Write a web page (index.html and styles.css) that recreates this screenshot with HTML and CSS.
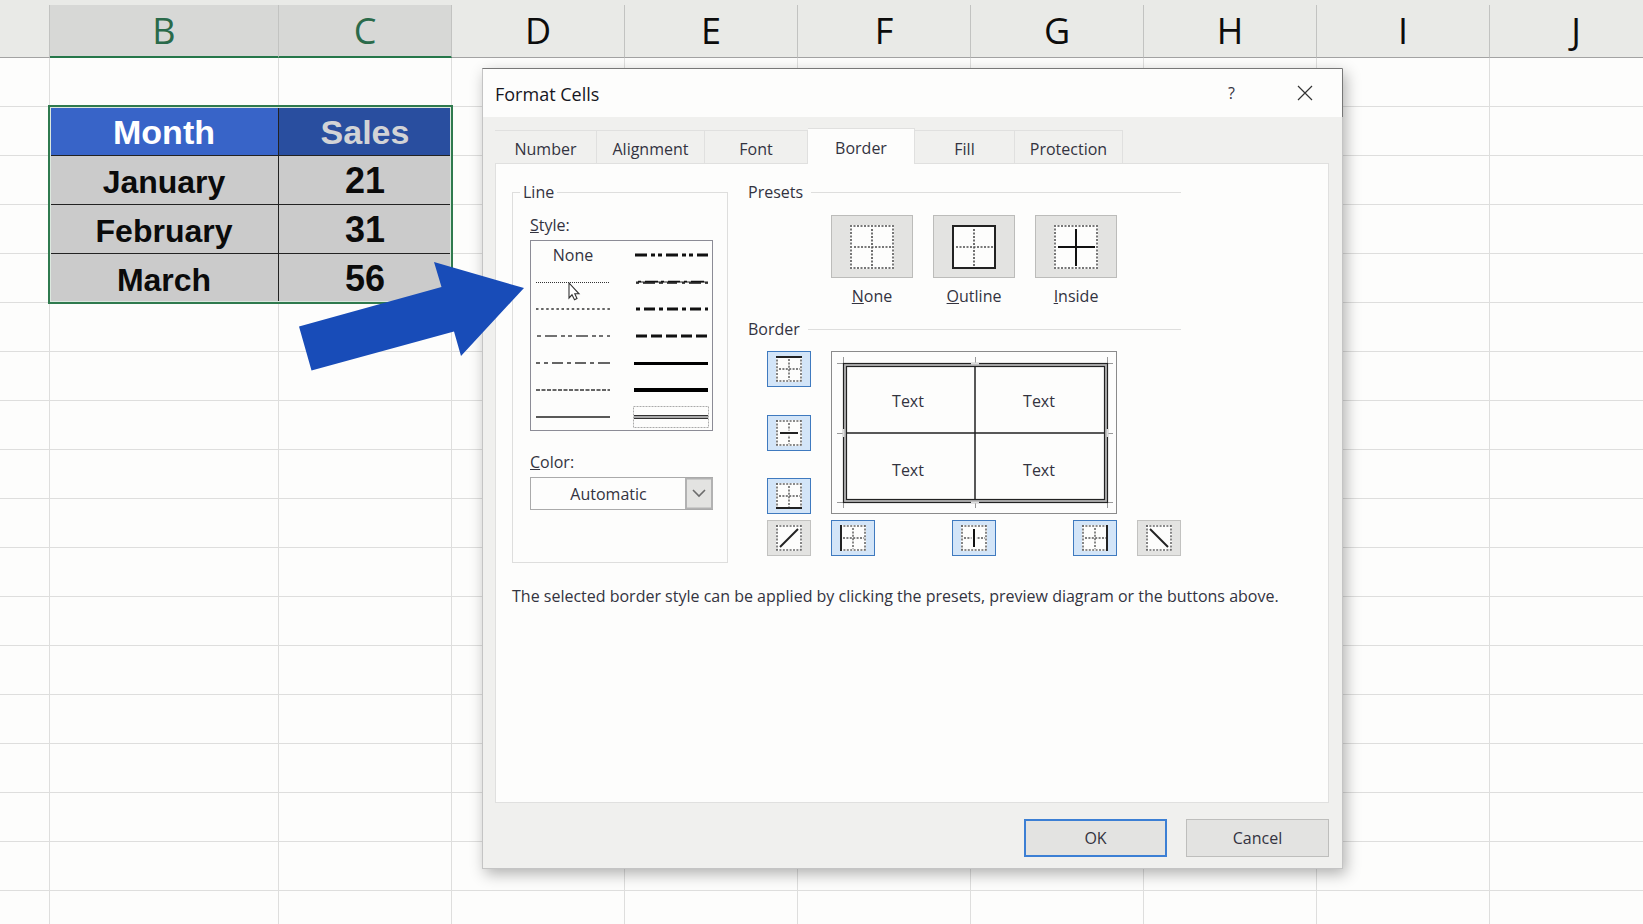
FILE: index.html
```
<!DOCTYPE html>
<html lang="en">
<head>
<meta charset="utf-8">
<title>Format Cells</title>
<link rel="stylesheet" href="styles.css">
</head>
<body>
<main class="desktop">
<table class="sheet">
<colgroup><col class="col-a"><col class="col-b"><col span="8" class="col-rest"></colgroup>
<thead>
<tr><th></th><th class="picked">B</th><th class="picked">C</th><th>D</th><th>E</th><th>F</th><th>G</th><th>H</th><th>I</th><th>J</th></tr>
</thead>
<tbody>
<tr><td><td><td><td><td><td><td><td><td><td></tr>
<tr><td><td class="data head">Month<td class="data head shaded">Sales<td><td><td><td><td><td><td></tr>
<tr><td><td class="data">January<td class="data num">21<td><td><td><td><td><td><td></tr>
<tr><td><td class="data">February<td class="data num">31<td><td><td><td><td><td><td></tr>
<tr><td><td class="data">March<td class="data num">56<td><td><td><td><td><td><td></tr>
<tr><td><td><td><td><td><td><td><td><td><td></tr>
<tr><td><td><td><td><td><td><td><td><td><td></tr>
<tr><td><td><td><td><td><td><td><td><td><td></tr>
<tr><td><td><td><td><td><td><td><td><td><td></tr>
<tr><td><td><td><td><td><td><td><td><td><td></tr>
<tr><td><td><td><td><td><td><td><td><td><td></tr>
<tr><td><td><td><td><td><td><td><td><td><td></tr>
<tr><td><td><td><td><td><td><td><td><td><td></tr>
<tr><td><td><td><td><td><td><td><td><td><td></tr>
<tr><td><td><td><td><td><td><td><td><td><td></tr>
<tr><td><td><td><td><td><td><td><td><td><td></tr>
<tr><td><td><td><td><td><td><td><td><td><td></tr>
<tr><td><td><td><td><td><td><td><td><td><td></tr>
</tbody>
</table>
<div class="selection"></div>

<svg class="defs" width="0" height="0" aria-hidden="true">
<defs>
<symbol id="frame" viewBox="0 0 44 44"><rect width="44" height="44" fill="#fdfdfc"/><path d="M0 1H44M0 43H44M1 0V44M43 0V44" stroke="#777" stroke-width="2" stroke-dasharray="2 1.5"/></symbol>
<symbol id="cross" viewBox="0 0 44 44"><path d="M4 22H41M22 4V41" stroke="#4c4c4c" stroke-width="1.6" stroke-dasharray="2 1.5"/></symbol>
<symbol id="sframe" viewBox="0 0 26 26"><rect width="26" height="26" fill="#fdfdfc"/><path d="M0 1H26M0 25H26M1 0V26M25 0V26" stroke="#666" stroke-width="1.6" stroke-dasharray="2 1.4"/></symbol>
<symbol id="sh" viewBox="0 0 26 26"><path d="M3 13H24" stroke="#555" stroke-width="1.4" stroke-dasharray="2 1.4"/></symbol>
<symbol id="sv" viewBox="0 0 26 26"><path d="M13 3V24" stroke="#555" stroke-width="1.4" stroke-dasharray="2 1.4"/></symbol>
</defs>
</svg>

<section class="dialog" role="dialog" aria-labelledby="dialog-title">
<header class="titlebar">
<h1 id="dialog-title">Format Cells</h1>
<button class="bar-btn" type="button" aria-label="Help">?</button>
<button class="bar-btn" type="button" aria-label="Close"><svg width="16" height="16" viewBox="0 0 16 16"><path d="M1 1L15 15M15 1L1 15" stroke="#333" stroke-width="1.2"/></svg></button>
</header>
<div class="content">
<nav class="tabs" role="tablist">
<button type="button" role="tab" class="tab t-number">Number</button>
<button type="button" role="tab" class="tab t-align">Alignment</button>
<button type="button" role="tab" class="tab t-font">Font</button>
<button type="button" role="tab" class="tab t-border active" aria-selected="true">Border</button>
<button type="button" role="tab" class="tab t-fill">Fill</button>
<button type="button" role="tab" class="tab t-protect">Protection</button>
</nav>
<div class="panel">
<div class="columns">
<fieldset class="line-group">
<legend>Line</legend>
<div class="label" id="style-label"><u>S</u>tyle:</div>
<div class="styles" role="listbox" aria-labelledby="style-label">
<button type="button" role="option" class="style">None</button>
<button type="button" role="option" class="style" aria-label="Medium dash dot dot"><svg width="74" height="20"><path d="M1 10H74" stroke="#111" stroke-width="3" stroke-dasharray="12 4 4 3 4 4"/></svg></button>
<button type="button" role="option" class="style" aria-label="Hair"><svg width="74" height="20"><path d="M0 10.5H74" stroke="#333" stroke-dasharray="1 1"/></svg></button>
<button type="button" role="option" class="style" aria-label="Slanted dash dot"><svg width="74" height="20"><path d="M2 10H74" stroke="#222" stroke-width="1"/><path d="M4 9.500H7M11 9.500H24M27 9.500H30M34 9.500H46M50 9.500H53M57 9.500H70" stroke="#111" stroke-width="1.600"/><path d="M2 11H5M9 11H21M25 11H29M33 11H43M48 11H51M55 11H67M71 11H74" stroke="#111" stroke-width="1.600"/></svg></button>
<button type="button" role="option" class="style" aria-label="Dotted"><svg width="74" height="20"><path d="M0 10H74" stroke="#333" stroke-width="1.6" stroke-dasharray="2.5 2.6"/></svg></button>
<button type="button" role="option" class="style" aria-label="Medium dash dot"><svg width="74" height="20"><path d="M2 10H74" stroke="#111" stroke-width="3" stroke-dasharray="4 4 11 4"/></svg></button>
<button type="button" role="option" class="style" aria-label="Dash dot dot"><svg width="74" height="20"><path d="M1 10H74" stroke="#444" stroke-width="1.6" stroke-dasharray="4 4 12 4 4 3"/></svg></button>
<button type="button" role="option" class="style" aria-label="Medium dashed"><svg width="74" height="20"><path d="M2 10H74" stroke="#111" stroke-width="3" stroke-dasharray="11 4"/></svg></button>
<button type="button" role="option" class="style" aria-label="Dash dot"><svg width="74" height="20"><path d="M0 10H74" stroke="#333" stroke-width="1.6" stroke-dasharray="4 4 4 4 11 4 4 4 11 4 4 4 12 4"/></svg></button>
<button type="button" role="option" class="style" aria-label="Medium"><svg width="74" height="20"><path d="M0 10.5H74" stroke="#000" stroke-width="3"/></svg></button>
<button type="button" role="option" class="style" aria-label="Dashed"><svg width="74" height="20"><path d="M0 10H74" stroke="#333" stroke-width="1.6" stroke-dasharray="4 1.5"/></svg></button>
<button type="button" role="option" class="style" aria-label="Thick"><svg width="74" height="20"><path d="M0 10H74" stroke="#000" stroke-width="4"/></svg></button>
<button type="button" role="option" class="style" aria-label="Thin"><svg width="74" height="20"><path d="M0 10H74" stroke="#222" stroke-width="1.6"/></svg></button>
<button type="button" role="option" class="style" aria-label="Double" aria-selected="true"><svg width="76" height="22"><rect x=".5" y=".5" width="75" height="21" fill="none" stroke="#aaa" stroke-dasharray="2 1"/><path d="M1 11H75" stroke="#aaa" stroke-width="4"/><path d="M1 9.5H75M1 12.5H75" stroke="#333"/></svg></button>
</div>
<label class="label color-label" for="color"><u>C</u>olor:</label>
<div class="combo">
<select id="color"><option>Automatic</option></select>
<svg class="combo-arrow" width="28" height="31" viewBox="0 0 28 31"><rect x="1" y=".5" width="26" height="30" fill="#e3e3e1" stroke="#b2b2b2" stroke-width="2"/><path d="M8 12L14 18L20 12" fill="none" stroke="#6c6c6c" stroke-width="1.6"/></svg>
</div>
</fieldset>

<div class="right">
<h2 class="rule">Presets</h2>
<div class="presets">
<label class="preset"><button type="button" class="tile"><svg width="44" height="44"><use href="#frame"/><use href="#cross"/></svg></button><span><u>N</u>one</span></label>
<label class="preset"><button type="button" class="tile"><svg width="44" height="44"><use href="#frame"/><use href="#cross"/><rect x="1" y="1" width="42" height="42" fill="none" stroke="#222" stroke-width="2"/></svg></button><span><u>O</u>utline</span></label>
<label class="preset"><button type="button" class="tile"><svg width="44" height="44"><use href="#frame"/><path d="M4 22H41M22 4V41" stroke="#111" stroke-width="2"/></svg></button><span><u>I</u>nside</span></label>
</div>
<h2 class="rule">Border</h2>
<div class="border-grid">
<div class="side">
<button type="button" class="edge on" aria-label="Top border"><svg width="26" height="26"><use href="#sframe"/><use href="#sh"/><use href="#sv"/><path d="M0 1H26" stroke="#222" stroke-width="2"/></svg></button>
<button type="button" class="edge on" aria-label="Inner horizontal border"><svg width="26" height="26"><use href="#sframe"/><use href="#sv"/><path d="M4 13H22" stroke="#fdfdfc" stroke-width="5"/><path d="M4 13H22" stroke="#222" stroke-width="2"/></svg></button>
<button type="button" class="edge on" aria-label="Bottom border"><svg width="26" height="26"><use href="#sframe"/><use href="#sh"/><use href="#sv"/><path d="M0 25H26" stroke="#222" stroke-width="2"/></svg></button>
</div>
<svg class="preview" viewBox="0 0 286 163" role="img" aria-label="Border preview">
<rect x=".5" y=".5" width="285" height="162" fill="#fdfdfc" stroke="#8b8b8b"/>
<path d="M6 12.500H12M12.500 6V12M144.500 6V12M276.500 6V12M277 12.500H282M6 82.500H12M277 82.500H282M6 151.500H12M12.500 152V157M144.500 152V157M276.500 152V157M277 151.500H282" stroke="#999"/>
<rect x="14" y="14" width="261" height="136" fill="none" stroke="#b4b4b4" stroke-width="2"/>
<rect x="12.500" y="12.500" width="264" height="139" fill="none" stroke="#222" stroke-width="1.200"/>
<rect x="15.500" y="15.500" width="258" height="133" fill="none" stroke="#222" stroke-width="1.200"/>
<path d="M15 82H274M144 15V149" stroke="#222" stroke-width="1.5"/>
<path d="M140 12.500H148M140 151.500H148M12.500 78V86M276.500 78V86" stroke="#ddd" stroke-width="2"/>
<g class="preview-text"><text x="77" y="56">Text</text><text x="208" y="56">Text</text><text x="77" y="125">Text</text><text x="208" y="125">Text</text></g>
</svg>
<button type="button" class="edge row2" aria-label="Diagonal up border"><svg width="26" height="26"><use href="#sframe"/><path d="M4 22L22 4" stroke="#222" stroke-width="2"/></svg></button>
<div class="bottom">
<button type="button" class="edge on left" aria-label="Left border"><svg width="26" height="26"><use href="#sframe"/><use href="#sh"/><use href="#sv"/><path d="M1 0V26" stroke="#222" stroke-width="2"/></svg></button>
<button type="button" class="edge on" aria-label="Inner vertical border"><svg width="26" height="26"><use href="#sframe"/><use href="#sh"/><path d="M13 4V22" stroke="#fdfdfc" stroke-width="5"/><path d="M13 4V22" stroke="#111" stroke-width="2"/></svg></button>
<button type="button" class="edge on" aria-label="Right border"><svg width="26" height="26"><use href="#sframe"/><use href="#sh"/><use href="#sv"/><path d="M25 0V26" stroke="#222" stroke-width="2"/></svg></button>
</div>
<button type="button" class="edge row2" aria-label="Diagonal down border"><svg width="26" height="26"><use href="#sframe"/><path d="M4 4L22 22" stroke="#222" stroke-width="2"/></svg></button>
</div>
</div>
</div>
<p class="hint">The selected border style can be applied by clicking the presets, preview diagram or the buttons above.</p>
</div>
<footer class="actions">
<button type="button" class="action primary">OK</button>
<button type="button" class="action">Cancel</button>
</footer>
</div>
</section>

<svg class="pointer-arrow" width="226" height="110" viewBox="0 0 226 110" aria-hidden="true"><path d="M0 65.500L142.500 26L135 1L225 27L162 95L155 70.500L12.500 109.500Z" fill="#184cb8"/></svg>
<svg class="cursor" width="13" height="19" viewBox="0 0 13 19" aria-hidden="true"><path d="M1 1V16L4 12.800L6.500 17.800L9 16.500L6.800 11.800H11Z" fill="#fff" stroke="#333" stroke-width="1.1"/></svg>
</main>
</body>
</html>
```
FILE: styles.css
```
* { box-sizing: border-box; }
body { margin: 0; overflow: hidden; background: #fdfdfc; font-family: "Open Sans", "Noto Sans", sans-serif; color: #33333f; }
.desktop { position: relative; height: 100vh; overflow: hidden; padding-top: 5px; background: #e9eae7; }
.defs { position: absolute; }

.sheet { table-layout: fixed; width: 1663px; border-spacing: 0; background: #fdfdfc; }
.col-a { width: 50px; }
.col-b { width: 229px; }
.col-rest { width: 173px; }
.sheet th { height: 53px; padding: 0; border-right: 1px solid #c2c3c1; border-bottom: 1px solid #a3a3a3; background: #e9eae7; color: #0c0c0c; font-size: 36px; font-weight: 400; line-height: 50px; }
.sheet th.picked { border-bottom: 2px solid #26774a; background: #d7d8d6; color: #2a6a4a; }
.sheet td { height: 49px; padding: 0; border-right: 1px solid #dededd; border-bottom: 1px solid #dededd; text-align: center; }
.sheet .data { padding-top: 4px; border-color: #222; background: #cbcbcb; color: #0b0b0b; font: bold 32px/36px "Liberation Sans", sans-serif; }
.sheet .num { padding-top: 2px; font-size: 36px; }
.sheet .head { padding-top: 2px; background: #3864c8; color: #fff; font-size: 34px; }
.sheet .shaded { background: #294e9f; color: #d2d3d6; }
.selection { position: absolute; left: 48px; top: 105px; width: 405px; height: 199px; border: 2px solid #2f7a4e; box-shadow: inset 0 0 0 1px #dce8df; }

.dialog { position: absolute; left: 482px; top: 68px; width: 861px; border: 1px solid #c4c4c4; border-top-color: #777; background: #f0f0ee; box-shadow: 3px 5px 14px rgba(0,0,0,.3); font-size: 16px; line-height: 22px; }
.dialog button, .dialog select { font: inherit; color: inherit; padding: 0; }
.titlebar { display: flex; align-items: center; height: 48px; padding: 0 1px 0 12px; background: #fdfdfc; border-right: 1px solid #777; margin-right: -1px; }
.titlebar h1 { flex: 1; margin: 0; padding-top: 2px; font-size: 18px; font-weight: 400; color: #16161e; }
.bar-btn { display: flex; align-items: center; justify-content: center; width: 73px; height: 46px; border: 0; background: none; }
.content { padding: 11px 13px 11px 12px; }
.tabs { display: flex; align-items: flex-end; height: 35px; }
.dialog .tab { height: 33px; padding-top: 3px; border: 1px solid #e0e0df; border-left: 0; border-bottom: 0; background: #f0f0ee; }
.dialog .tab.active { height: 36px; margin-bottom: -1px; padding-top: 2px; background: #fdfdfc; z-index: 1; }
.t-number { width: 102px; }
.t-align { width: 108px; }
.t-font { width: 103px; }
.t-border { width: 107px; }
.t-fill { width: 100px; }
.t-protect { width: 108px; }
.panel { min-height: 640px; padding: 17px 16px; border: 1px solid #e0e0df; background: #fdfdfc; }
.columns { display: flex; gap: 20px; }
.line-group { width: 216px; height: 382px; margin: 0; padding: 11px 14px 0 17px; border: 1px solid #dededd; }
.line-group legend { margin-left: -10px; padding: 0 3px; }
.label { display: block; margin-bottom: 4px; }
.styles { display: grid; grid-template-columns: 1fr 1fr; grid-auto-rows: 27px; column-gap: 20px; padding: 0 2px 0 3px; border: 1px solid #8c8c96; background: #fdfdfc; }
.style { display: flex; align-items: center; justify-content: center; border: 0; background: none; }
.color-label { margin-top: 20px; }
.combo { display: grid; }
.combo select { grid-area: 1 / 1; height: 33px; appearance: none; border: 1px solid #aaa; border-radius: 0; background: #fdfdfc; padding-right: 26px; text-align: center; text-align-last: center; }
.combo-arrow { grid-area: 1 / 1; justify-self: end; align-self: center; pointer-events: none; }

.right { width: 433px; }
.rule { display: flex; align-items: center; gap: 8px; margin: 0; font-size: 16px; font-weight: 400; }
.rule::after { content: ""; flex: 1; height: 1px; background: #dededd; }
.presets { display: flex; gap: 20px; margin: 12px 0 11px 83px; }
.preset { display: flex; flex-direction: column; align-items: center; gap: 7px; }
.tile { display: flex; align-items: center; justify-content: center; width: 82px; height: 63px; border: 1px solid #bcbcba; background: #e3e3e1; }
.border-grid { display: grid; grid-template-columns: 44px 286px 44px; column-gap: 20px; row-gap: 6px; margin: 11px 0 0 19px; }
.side { display: flex; flex-direction: column; justify-content: space-between; }
.preview { width: 286px; height: 163px; }
.preview-text { fill: #33333f; font-size: 16px; text-anchor: middle; }
.edge { display: flex; align-items: center; justify-content: center; width: 44px; height: 36px; border: 1px solid #c2c2c0; background: #e3e3e1; }
.edge.on { border-color: #3f7abf; background: #d3e5f8; }
.row2 { grid-row: 2; }
.bottom { display: flex; justify-content: space-between; grid-row: 2; }
.hint { margin: 22px 0 0; white-space: nowrap; }
.actions { display: flex; justify-content: flex-end; gap: 19px; padding-top: 16px; }
.action { width: 143px; height: 38px; border: 1px solid #bebebc; background: #e3e3e1; }
.action.primary { border: 2px solid #3c7fd4; }

.pointer-arrow { position: absolute; left: 299px; top: 261px; }
.cursor { position: absolute; left: 568px; top: 282px; }
```
